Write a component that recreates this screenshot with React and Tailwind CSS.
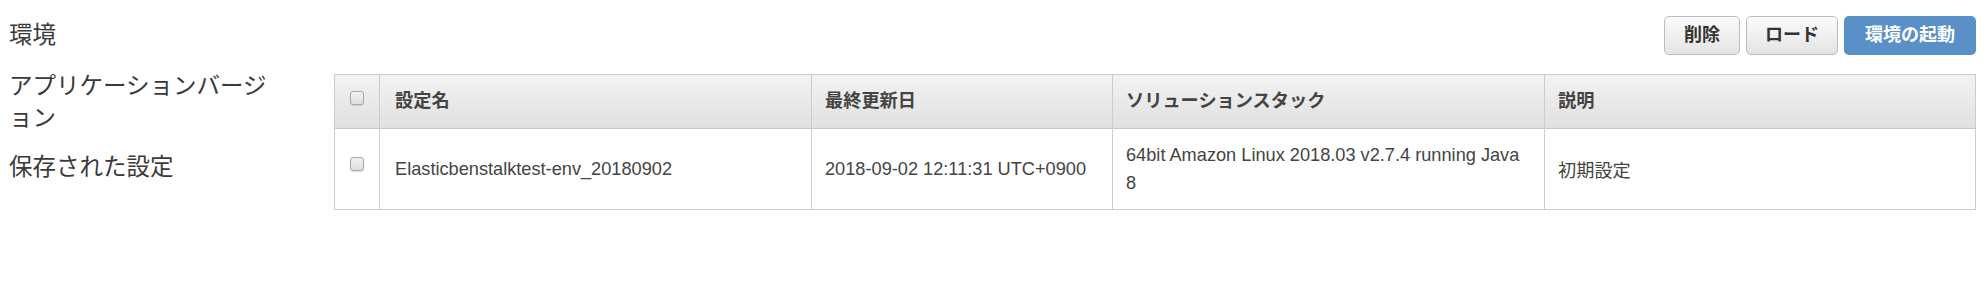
import React from 'react'

const font = { fontFamily: '"Liberation Sans", "Noto Sans CJK JP", sans-serif' }

const rows = [
  {
    name: 'Elasticbenstalktest-env_20180902',
    updated: '2018-09-02 12:11:31 UTC+0900',
    stack: '64bit Amazon Linux 2018.03 v2.7.4 running Java 8',
    desc: '初期設定',
  },
]

function Checkbox() {
  return (
    <span className="inline-block w-[14px] h-[14px] rounded-[3px] border border-[#a8a8a8] bg-gradient-to-b from-[#f2f2f2] to-[#dedede] shadow-[0_1px_1px_rgba(0,0,0,0.12)]" />
  )
}

function GrayButton({ children, className = '' }) {
  return (
    <button
      className={
        'h-[39px] rounded-[5px] border border-[#bdbdbd] bg-gradient-to-b from-[#fbfbfb] to-[#e4e4e4] text-[18px] font-bold text-[#333] ' +
        className
      }
    >
      {children}
    </button>
  )
}

export default function App() {
  return (
    <div className="flex w-[1987px] h-[287px] bg-white text-[#444]" style={font}>
      {/* Sidebar */}
      <div className="w-[334px] shrink-0 pl-[9px] pt-[19px]">
        <ul className="w-[275px] text-[23.5px] leading-[32px] text-[#3a3a3a]">
          <li className="mb-[19px]">環境</li>
          <li className="mb-[17px]">アプリケーションバージョン</li>
          <li>保存された設定</li>
        </ul>
      </div>

      {/* Main */}
      <div className="w-[1642px] shrink-0">
        <div className="flex justify-end gap-[6px] pt-[16px]">
          <GrayButton className="w-[76px]">削除</GrayButton>
          <GrayButton className="w-[92px]">ロード</GrayButton>
          <button className="h-[39px] w-[132px] rounded-[5px] bg-[#5a90c8] text-[18px] font-bold text-white">
            環境の起動
          </button>
        </div>

        <table className="mt-[19px] w-full table-fixed border-collapse border border-[#cccccc] text-[18.2px]">
          <colgroup>
            <col className="w-[45px]" />
            <col className="w-[432px]" />
            <col className="w-[301px]" />
            <col className="w-[432px]" />
            <col />
          </colgroup>
          <thead>
            <tr className="h-[54px] bg-gradient-to-b from-[#f3f3f3] to-[#e0e0e0] border-b border-[#c8c8c8]">
              <th className="border-r border-[#cccccc] text-center align-middle">
                <span className="inline-flex translate-y-[-2px]">
                  <Checkbox />
                </span>
              </th>
              <th className="border-r border-[#cccccc] pl-[15px] text-left font-bold text-[#444]">設定名</th>
              <th className="border-r border-[#cccccc] pl-[13px] text-left font-bold text-[#444]">最終更新日</th>
              <th className="border-r border-[#cccccc] pl-[13px] text-left font-bold text-[#444]">ソリューションスタック</th>
              <th className="pl-[13px] text-left font-bold text-[#444]">説明</th>
            </tr>
          </thead>
          <tbody>
            {rows.map((r) => (
              <tr key={r.name} className="h-[81px]">
                <td className="border-r border-[#cccccc] text-center align-middle">
                  <span className="inline-flex translate-y-[-3px]">
                    <Checkbox />
                  </span>
                </td>
                <td className="border-r border-[#cccccc] pl-[15px] pr-[13px] leading-[28px]">{r.name}</td>
                <td className="border-r border-[#cccccc] px-[13px] leading-[28px]">{r.updated}</td>
                <td className="border-r border-[#cccccc] px-[13px] leading-[28px]">{r.stack}</td>
                <td className="px-[13px] leading-[28px] pt-[4px]">{r.desc}</td>
              </tr>
            ))}
          </tbody>
        </table>
      </div>
    </div>
  )
}
